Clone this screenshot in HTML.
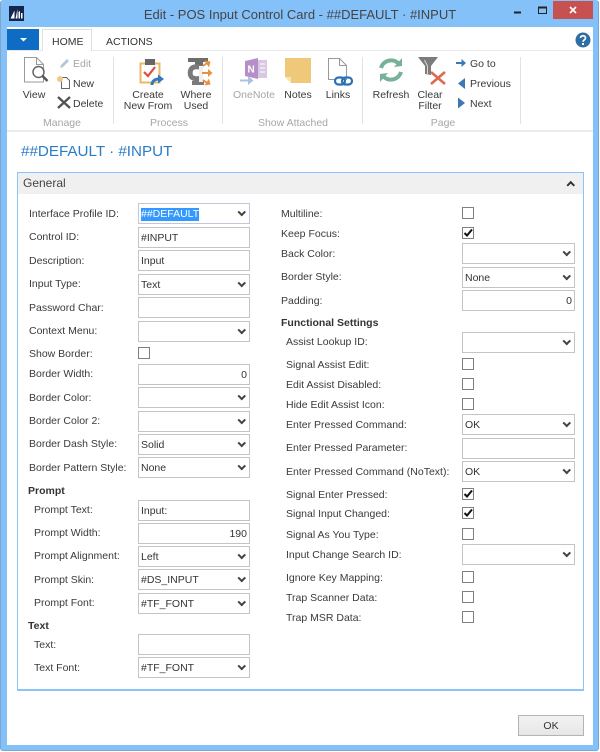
<!DOCTYPE html>
<html><head><meta charset="utf-8"><title>Edit - POS Input Control Card</title>
<style>
html,body{margin:0;padding:0;background:#fff}
body{width:600px;height:752px;position:relative;overflow:hidden;font-family:"Liberation Sans",sans-serif;font-size:10.5px;color:#3a3a3a}
#p{position:absolute;left:0;top:0;width:600px;height:752px;filter:blur(.3px)}
#win{position:absolute;left:0;top:0;width:599px;height:751px;background:#85c1f9;border-radius:3px;box-sizing:border-box;border:1px solid #7aa6cf;border-top-color:#85c1f9}
#cl{position:absolute;left:7px;top:27px;width:586px;height:718px;background:#fff}
.a{position:absolute;white-space:nowrap}
.l{position:absolute;white-space:nowrap;height:16px;line-height:16px;margin-top:1px}
.c{transform:translateX(-50%)}
.g{color:#a6a6a6}
.b{font-weight:bold;color:#333}
.f{position:absolute;box-sizing:border-box;width:112px;height:21px;border:1px solid #c4c4c4;background:#fff;line-height:20px;padding:0 2px;white-space:nowrap;color:#333}
.r{left:462px;width:113px}
.s{left:138px}
.n{text-align:right}
.d::after{content:"";position:absolute;right:5px;top:5px;width:3.500px;height:3.500px;border-right:2px solid #444;border-bottom:2px solid #444;transform:rotate(45deg)}
.k{position:absolute;box-sizing:border-box;width:12px;height:12px;border:1px solid #808080;background:#fff}
svg{position:absolute;left:0;top:0}
</style></head><body><div id="p">
<div id="win"></div>
<div id="cl"></div>

<!-- title bar -->
<div class="a c" style="left:300px;top:6px;font-size:13px;line-height:17px;color:#444">Edit - POS Input Control Card - ##DEFAULT · #INPUT</div>
<div class="a" style="left:553px;top:1px;width:40px;height:18px;background:#c75050"></div>

<!-- file button & tabs -->
<div class="a" style="left:7px;top:29px;width:32px;height:21px;background:#0f6cc4"></div>
<div class="a" style="left:42px;top:29px;width:50px;height:22px;box-sizing:border-box;border:1px solid #e0e0e0;border-bottom:0;background:#fff;z-index:2"></div>
<div class="a" style="left:7px;top:50px;width:586px;height:1px;background:#e8e8e8"></div>
<div class="l" style="left:52px;top:33px;z-index:3;color:#333">HOME</div>
<div class="l" style="left:106px;top:33px;color:#333">ACTIONS</div>

<!-- ribbon bottom -->
<div class="a" style="left:7px;top:130px;width:586px;height:2px;background:#ececec"></div>
<div class="a" style="left:113px;top:57px;width:1px;height:67px;background:#e2e2e2"></div>
<div class="a" style="left:222px;top:57px;width:1px;height:67px;background:#e2e2e2"></div>
<div class="a" style="left:362px;top:57px;width:1px;height:67px;background:#e2e2e2"></div>
<div class="a" style="left:520px;top:57px;width:1px;height:67px;background:#e2e2e2"></div>

<svg width="600" height="752" viewBox="0 0 600 752" fill="none" style="z-index:4">
<!-- logo -->
<rect x="9" y="6" width="15" height="15" fill="#14264f"/>
<path d="M10.500 18.500L14.500 10.500V18.500ZM15.500 18.500L17.500 9V18.500ZM18.500 18.500V12L20 11V18.500ZM21 18.500V13H22.500V18.500Z" fill="#fff"/>
<!-- window buttons -->
<path d="M514 12.500h7" stroke="#222" stroke-width="2"/>
<path d="M538.500 7.500h8v6h-8z" stroke="#222" stroke-width="1"/><path d="M538 7.500h9" stroke="#222" stroke-width="2"/>
<path d="M570 7l6 6M576 7l-6 6" stroke="#fff" stroke-width="1.600"/>
<!-- file arrow -->
<path d="M20 38h7l-3.500 3.500z" fill="#fff"/>
<!-- help -->
<circle cx="583" cy="40" r="7.500" fill="#2f6ea5"/>
<path d="M580.500 38c0-3 5-3 5 0 0 2-2.500 1.800-2.500 3.800" stroke="#fff" stroke-width="1.700"/><rect x="582" y="43" width="2" height="2" fill="#fff"/>
<!-- view -->
<path d="M24.500 57.500h12l7 7v17.500h-19z" stroke="#999"/><path d="M36.500 57.500v7h7" stroke="#999"/>
<circle cx="38.500" cy="72" r="5.500" fill="#fff" stroke="#666" stroke-width="1.500"/>
<path d="M42.500 76l5 5" stroke="#555" stroke-width="2.500"/>
<!-- edit -->
<path d="M60 68l1-3 6-6 2 2-6 6z" fill="#b3c7da"/>
<!-- new -->
<path d="M61.500 77.500h5l3 3v8h-8z" fill="#fff" stroke="#666"/>
<circle cx="60" cy="79" r="3" fill="#f3c78a"/>
<!-- delete -->
<path d="M58 97l12 11M70 97l-12 11" stroke="#555" stroke-width="2.400"/>
<!-- create -->
<rect x="140.500" y="63.500" width="19" height="19" fill="#fff" stroke="#eab867" stroke-width="2"/>
<rect x="145" y="59" width="10" height="6" fill="#666"/>
<path d="M144 72l4 4 7-9" stroke="#d9503c" stroke-width="2.200"/>
<path d="M152 85c0-4 3-6 7-6" stroke="#3279bd" stroke-width="3"/><path d="M158 74.500l6 4.500-6 4.500z" fill="#3279bd"/>
<!-- where used -->
<path d="M188 58h20v4h-5v4h-8v-4h-7z" fill="#6e6e6e"/>
<path d="M201 67.500c-3-1-6-1-8 0-3.500 1.500-4 9 0 10.500 2 1 5 1 8 0" stroke="#7a7a7a" stroke-width="5"/>
<path d="M192 81h12v4h-12z" fill="#7a7a7a"/>
<path d="M199 66h4v16h-4z" fill="#f0f0f0"/>
<path d="M203 66l4-3M202 73h7M203 80l4 3" stroke="#e98f40" stroke-width="2"/>
<path d="M204.500 60.500l6 1-1.500 6zM208 69l4.500 4-4.500 4zM204.500 85.500l6-1-1.500-6z" fill="#e98f40"/>
<!-- onenote -->
<path d="M245 61l13-3v21l-13-3z" fill="#b68fc8"/>
<text x="247.500" y="72.500" font-family="Liberation Sans, sans-serif" font-size="10" font-weight="bold" fill="#fff">N</text>
<path d="M258 60h9v18h-9z" fill="#d9c8e3"/><path d="M260 64h5M260 68h5M260 72h5" stroke="#fff"/>
<path d="M240 80.500h11" stroke="#a9c4e2" stroke-width="2"/><path d="M248 76l5.500 4.500-5.500 4.500z" fill="#a9c4e2"/>
<!-- notes -->
<path d="M285 58h26v25h-20l-6-6z" fill="#f0c87a"/><path d="M285 77h6v6z" fill="#f7e2b0"/>
<!-- links -->
<path d="M328.500 58.500h11l7 7v14h-18v-21z" fill="#fff" stroke="#999"/><path d="M339.500 58.500v7h7" stroke="#999"/>
<rect x="335" y="77.500" width="10" height="7" rx="3.500" fill="#fff" stroke="#2a70b5" stroke-width="2.200"/>
<rect x="342" y="77.500" width="10" height="7" rx="3.500" fill="none" stroke="#2a70b5" stroke-width="2.200"/>
<!-- refresh -->
<path d="M381 68a10.500 10.500 0 0 1 17-5" stroke="#78b09a" stroke-width="4"/><path d="M394 67l8-1v-8z" fill="#78b09a"/>
<path d="M401 72a10.500 10.500 0 0 1-17 5" stroke="#78b09a" stroke-width="4"/><path d="M388 73l-8 1v8z" fill="#78b09a"/>
<!-- clear filter -->
<path d="M418 57h20l-7 9v9l-6-1v-8z" fill="#7c7c7c"/><path d="M424.500 60l3 6v8" stroke="#d8d8d8" stroke-width="1"/>
<path d="M431 72l14 12M445 72l-14 12" stroke="#dd6a50" stroke-width="2.600"/>
<!-- nav -->
<path d="M456 63h8" stroke="#3c78b4" stroke-width="2"/><path d="M461.500 59l4.500 4-4.500 4z" fill="#3c78b4"/>
<path d="M465 78v11l-7-5.500z" fill="#3c78b4"/>
<path d="M458 97.500v11l7-5.500z" fill="#3c78b4"/>
</svg>

<!-- ribbon labels -->
<div class="l c" style="left:34px;top:86px">View</div>
<div class="l g" style="left:73px;top:55px">Edit</div>
<div class="l" style="left:73px;top:75px">New</div>
<div class="l" style="left:73px;top:95px">Delete</div>
<div class="l c g" style="left:62px;top:114px">Manage</div>
<div class="l c" style="left:148px;top:86px">Create</div>
<div class="l c" style="left:148px;top:97px">New From</div>
<div class="l c" style="left:196px;top:86px">Where</div>
<div class="l c" style="left:196px;top:97px">Used</div>
<div class="l c g" style="left:169px;top:114px">Process</div>
<div class="l c g" style="left:254px;top:86px">OneNote</div>
<div class="l c" style="left:298px;top:86px">Notes</div>
<div class="l c" style="left:338px;top:86px">Links</div>
<div class="l c g" style="left:293px;top:114px">Show Attached</div>
<div class="l c" style="left:391px;top:86px">Refresh</div>
<div class="l c" style="left:430px;top:86px">Clear</div>
<div class="l c" style="left:430px;top:97px">Filter</div>
<div class="l" style="left:470px;top:55px">Go to</div>
<div class="l" style="left:470px;top:75px">Previous</div>
<div class="l" style="left:470px;top:95px">Next</div>
<div class="l c g" style="left:443px;top:114px">Page</div>

<!-- heading -->
<div class="a" style="left:21px;top:143px;font-size:15.200px;line-height:18px;color:#2b7cc7">##DEFAULT · #INPUT</div>

<!-- panel -->
<div class="a" style="left:17px;top:172px;width:567px;height:519px;box-sizing:border-box;border:1px solid #8cc4f8;border-bottom-width:2px;background:#fff"></div>
<div class="a" style="left:18px;top:173px;width:565px;height:21px;background:#f0f0f0"></div>
<div class="l" style="left:23px;top:174px;font-size:12px;color:#444">General</div>
<div class="a" style="left:568px;top:182px;width:3.500px;height:3.500px;border-left:2px solid #333;border-top:2px solid #333;transform:rotate(45deg)"></div>

<!-- left labels -->
<div class="l" style="left:29px;top:205px">Interface Profile ID:</div>
<div class="l" style="left:29px;top:228px">Control ID:</div>
<div class="l" style="left:29px;top:252px">Description:</div>
<div class="l" style="left:29px;top:275px">Input Type:</div>
<div class="l" style="left:29px;top:299px">Password Char:</div>
<div class="l" style="left:29px;top:322px">Context Menu:</div>
<div class="l" style="left:29px;top:345px">Show Border:</div>
<div class="l" style="left:29px;top:365px">Border Width:</div>
<div class="l" style="left:29px;top:389px">Border Color:</div>
<div class="l" style="left:29px;top:412px">Border Color 2:</div>
<div class="l" style="left:29px;top:435px">Border Dash Style:</div>
<div class="l" style="left:29px;top:459px">Border Pattern Style:</div>
<div class="l b" style="left:28px;top:482px">Prompt</div>
<div class="l" style="left:34px;top:501px">Prompt Text:</div>
<div class="l" style="left:34px;top:524px">Prompt Width:</div>
<div class="l" style="left:34px;top:547px">Prompt Alignment:</div>
<div class="l" style="left:34px;top:571px">Prompt Skin:</div>
<div class="l" style="left:34px;top:594px">Prompt Font:</div>
<div class="l b" style="left:28px;top:617px">Text</div>
<div class="l" style="left:34px;top:636px">Text:</div>
<div class="l" style="left:34px;top:659px">Text Font:</div>

<!-- left fields -->
<div class="f s d" style="top:203px;border-color:#c6c6d8"><span style="background:#3399ff;color:#fff;display:inline-block;line-height:13px">##DEFAULT</span></div>
<div class="f s" style="top:227px">#INPUT</div>
<div class="f s" style="top:250px">Input</div>
<div class="f s d" style="top:274px">Text</div>
<div class="f s" style="top:297px"></div>
<div class="f s d" style="top:321px"></div>
<div class="k" style="left:138px;top:347px"></div>
<div class="f s n" style="top:364px">0</div>
<div class="f s d" style="top:387px"></div>
<div class="f s d" style="top:411px"></div>
<div class="f s d" style="top:434px">Solid</div>
<div class="f s d" style="top:457px">None</div>
<div class="f s" style="top:500px">Input:</div>
<div class="f s n" style="top:523px">190</div>
<div class="f s d" style="top:546px">Left</div>
<div class="f s d" style="top:569px">#DS_INPUT</div>
<div class="f s d" style="top:593px">#TF_FONT</div>
<div class="f s" style="top:634px"></div>
<div class="f s d" style="top:657px">#TF_FONT</div>

<!-- right labels -->
<div class="l" style="left:281px;top:205px">Multiline:</div>
<div class="l" style="left:281px;top:225px">Keep Focus:</div>
<div class="l" style="left:281px;top:245px">Back Color:</div>
<div class="l" style="left:281px;top:268px">Border Style:</div>
<div class="l" style="left:281px;top:292px">Padding:</div>
<div class="l b" style="left:281px;top:314px">Functional Settings</div>
<div class="l" style="left:286px;top:333px">Assist Lookup ID:</div>
<div class="l" style="left:286px;top:356px">Signal Assist Edit:</div>
<div class="l" style="left:286px;top:376px">Edit Assist Disabled:</div>
<div class="l" style="left:286px;top:396px">Hide Edit Assist Icon:</div>
<div class="l" style="left:286px;top:416px">Enter Pressed Command:</div>
<div class="l" style="left:286px;top:439px">Enter Pressed Parameter:</div>
<div class="l" style="left:286px;top:463px">Enter Pressed Command (NoText):</div>
<div class="l" style="left:286px;top:486px">Signal Enter Pressed:</div>
<div class="l" style="left:286px;top:505px">Signal Input Changed:</div>
<div class="l" style="left:286px;top:526px">Signal As You Type:</div>
<div class="l" style="left:286px;top:546px">Input Change Search ID:</div>
<div class="l" style="left:286px;top:569px">Ignore Key Mapping:</div>
<div class="l" style="left:286px;top:589px">Trap Scanner Data:</div>
<div class="l" style="left:286px;top:609px">Trap MSR Data:</div>

<!-- right fields -->
<div class="k" style="left:462px;top:207px"></div>
<div class="k" style="left:462px;top:227px"></div>
<div class="f r d" style="top:243px"></div>
<div class="f r d" style="top:267px">None</div>
<div class="f r n" style="top:290px">0</div>
<div class="f r d" style="top:332px"></div>
<div class="k" style="left:462px;top:358px"></div>
<div class="k" style="left:462px;top:378px"></div>
<div class="k" style="left:462px;top:398px"></div>
<div class="f r d" style="top:414px">OK</div>
<div class="f r" style="top:438px"></div>
<div class="f r d" style="top:461px">OK</div>
<div class="k" style="left:462px;top:488px"></div>
<div class="k" style="left:462px;top:507px"></div>
<div class="k" style="left:462px;top:528px"></div>
<div class="f r d" style="top:544px"></div>
<div class="k" style="left:462px;top:571px"></div>
<div class="k" style="left:462px;top:591px"></div>
<div class="k" style="left:462px;top:611px"></div>

<svg width="600" height="752" viewBox="0 0 600 752" fill="none" style="z-index:5">
<path d="M464.500 233l2.500 2.500 5-6" stroke="#111" stroke-width="2"/>
<path d="M464.500 494l2.500 2.500 5-6" stroke="#111" stroke-width="2"/>
<path d="M464.500 513l2.500 2.500 5-6" stroke="#111" stroke-width="2"/>
</svg>

<!-- OK -->
<div class="a" style="left:518px;top:715px;width:66px;height:21px;box-sizing:border-box;border:1px solid #b4b4b4;background:linear-gradient(#f2f2f2,#e6e6e6);text-align:center;line-height:20px;color:#333">OK</div>
</div></body></html>
